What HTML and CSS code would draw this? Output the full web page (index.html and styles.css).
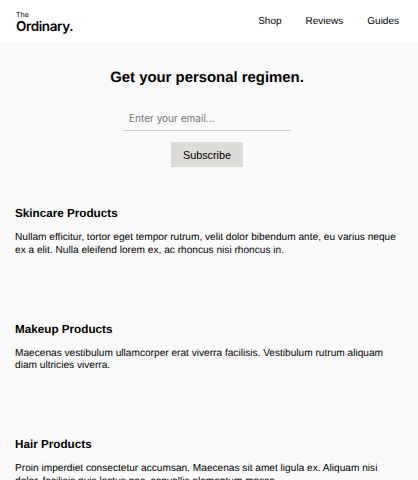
FILE: index.html
```html
<!DOCTYPE html>
<html lang="en">
<head>
<meta charset="utf-8">
<title>The Ordinary</title>
<link rel="stylesheet" href="styles.css">
</head>
<body>
<header class="site-header">
  <a class="logo" href="#"><span class="logo-the">The</span><span class="logo-name">Ordinary.</span></a>
  <nav class="nav">
    <a href="#">Shop</a>
    <a href="#">Reviews</a>
    <a href="#">Guides</a>
  </nav>
</header>
<main>
  <section class="signup">
    <h1>Get your personal regimen.</h1>
    <input class="email" type="text" placeholder="Enter your email...">
    <button class="subscribe" type="button">Subscribe</button>
  </section>
  <section class="category">
    <h2>Skincare Products</h2>
    <p>Nullam efficitur, tortor eget tempor rutrum, velit dolor bibendum ante, eu varius neque ex a elit. Nulla eleifend lorem ex, ac rhoncus nisi rhoncus in.</p>
  </section>
  <section class="category">
    <h2>Makeup Products</h2>
    <p>Maecenas vestibulum ullamcorper erat viverra facilisis. Vestibulum rutrum aliquam diam ultricies viverra.</p>
  </section>
  <section class="category">
    <h2>Hair Products</h2>
    <p>Proin imperdiet consectetur accumsan. Maecenas sit amet ligula ex. Aliquam nisi dolor, facilisis quis lectus nec, convallis elementum massa.</p>
  </section>
</main>
</body>
</html>
```
FILE: styles.css
```css
html, body {
  height: 480px;
  overflow: hidden;
}
body {
  margin: 0;
  background: #fafafa;
  color: #000;
  font-family: "Liberation Sans", Arial, sans-serif;
  text-rendering: geometricPrecision;
}
.site-header {
  height: 42px;
  background: #fff;
  display: flex;
  justify-content: space-between;
  align-items: center;
  padding: 0 19px 0 16px;
}
.logo {
  display: flex;
  flex-direction: column;
  color: #000;
  text-decoration: none;
  font-family: Inter, sans-serif;
  margin-top: 2px;
}
.logo-the {
  font-size: 7px;
  line-height: 9px;
}
.logo-name {
  font-size: 13.5px;
  line-height: 16px;
  font-weight: 600;
  letter-spacing: -0.4px;
}
.nav {
  display: flex;
  gap: 24px;
}
.nav a {
  color: #000;
  text-decoration: none;
  font-size: 10px;
}
.signup {
  display: flex;
  flex-direction: column;
  align-items: center;
  padding: 26px 4px 0 0;
}
h1 {
  margin: 0;
  font-size: 14.9px;
  line-height: 20px;
  font-weight: 700;
}
.email {
  box-sizing: border-box;
  width: 168px;
  height: 30px;
  margin-top: 13px;
  padding: 5px 6px 0;
  border: 0;
  border-bottom: 1px solid #ccc;
  background: transparent;
  font-family: Inter, sans-serif;
  font-size: 10.05px;
}
.email::placeholder {
  color: #757575;
}
.subscribe {
  width: 72px;
  height: 25px;
  margin-top: 11px;
  border: 0;
  background: #dcdbd7;
  color: #000;
  font-family: "Liberation Sans", Arial, sans-serif;
  font-size: 10.8px;
}
.category {
  padding: 0 15px;
  height: 115.5px;
}
.signup + .category {
  margin-top: 40px;
}
h2 {
  margin: 0;
  font-size: 11.7px;
  line-height: 14px;
  font-weight: 700;
}
.category p {
  margin: 11px 0 0;
  font-size: 10.15px;
  line-height: 12.6px;
}
```
